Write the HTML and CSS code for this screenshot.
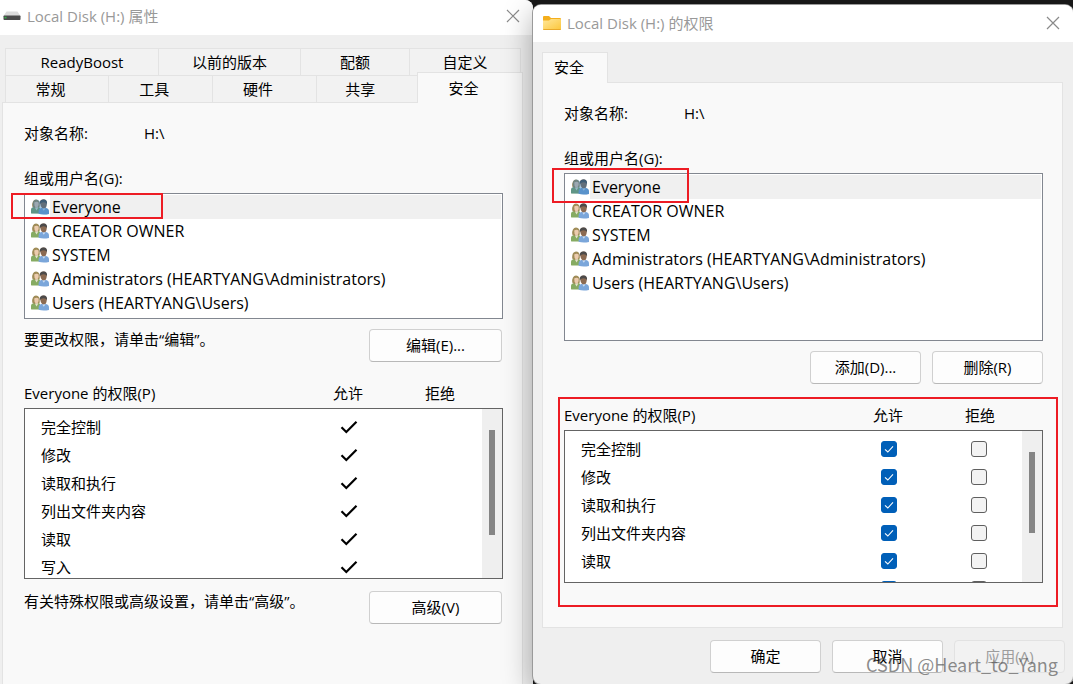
FILE: index.html
```html
<!DOCTYPE html>
<html lang="zh-CN">
    <head>
        <meta charset="utf-8">
        <title>Local Disk (H:) 属性</title>
        <link rel="stylesheet" href="styles.css">
    </head>
    <body>
        <svg class="defs" aria-hidden="true">
            <symbol id="tick" viewBox="0 0 18 14">
                <path d="M1.5 7.2 L6.3 12 L16.5 1.8" fill="none" stroke="#000" stroke-width="2.2"/>
            </symbol>
            <symbol id="cross" viewBox="0 0 14 14">
                <path d="M1 1 L13 13 M13 1 L1 13" fill="none" stroke="#8a8a8a" stroke-width="1.2"/>
            </symbol>
            <symbol id="users" viewBox="0 0 18 16">
                <path d="M0 14.2V11Q0 8.6 3 8L8 8Q9.6 9 9.6 14.4L3 14.6Q0 14.6 0 14.2Z" fill="#86ab62"/>
                <path d="M1.2 7.6Q.8 1 5 .6Q9.2.6 8.8 7.4L6.5 9L3.4 9Z" fill="#a08c58"/>
                <path d="M3.2 3.6Q5.5 2 7.6 3.4Q8.2 6.8 6.6 8.2Q4.6 9 3.6 7Z" fill="#ecccae"/>
                <path d="M3.8 8.4L5.6 11.4L7.4 8.2Z" fill="#e6e2cc"/>
                <path d="M7.6 14.8V12Q7.8 9.4 10.2 9L15 9Q18 9.6 18 12.6V15Q12 16.2 7.6 14.8Z" fill="#7ba6da"/>
                <path d="M9.2 4.6Q9 .6 12.6 .6Q16 .8 15.8 5Q15.4 9.4 12.8 9.8Q10 9.4 9.2 4.6Z" fill="#8b6a52"/>
                <path d="M8.8 5Q8 .4 12.6 .4Q16.6 .6 16 5Q15.2 3.2 12.6 3.2Q10 3.2 8.8 5Z" fill="#4c4a4a"/>
                <path d="M11.2 9.4L12.8 11.8L14.6 9.2Z" fill="#c8dcf2"/>
            </symbol>
            <symbol id="users-selected" viewBox="0 0 18 16">
                <use href="#users" width="18" height="16"/>
                <path d="M0 14.2V11Q0 8.6 2 8Q.8 1 5 .6Q8 .6 8.8 2.4Q10 .4 12.6 .4Q16.6 .6 16 5L15 9Q18 9.6 18 12.6V15Q12 16.2 7.6 14.8L3 14.6Q0 14.6 0 14.2Z" fill="#2a78b8" fill-opacity=".42"/>
            </symbol>
        </svg>
        <div class="desktop">
            <section class="window back">
                <header class="titlebar">
                    <svg class="ico" viewBox="0 0 18 18">
                        <path d="M3.5 4.5H14.5L17.5 9H.5Z" fill="#dcdcdc"/>
                        <rect x=".5" y="8.5" width="17" height="4.5" rx=".8" fill="#4a4a4a"/>
                        <rect x="1.5" y="9.8" width="2" height="1.6" fill="#35b04a"/>
                    </svg>
                    <h1>Local Disk (H:) 属性</h1>
                    <button class="close" aria-label="关闭"><svg><use href="#cross"/></svg></button>
                </header>
                <div class="content">
                    <nav class="tabs row1">
                        <button>ReadyBoost</button>
                        <button>以前的版本</button>
                        <button>配额</button>
                        <button>自定义</button>
                    </nav>
                    <nav class="tabs row2">
                        <button>常规</button>
                        <button>工具</button>
                        <button>硬件</button>
                        <button>共享</button>
                        <button class="active">安全</button>
                    </nav>
                    <div class="pane">
                        <p class="object"><span>对象名称:</span>H:\</p>
                        <p class="label" id="groups1">组或用户名(G):</p>
                        <div class="listbox">
                            <ul aria-labelledby="groups1">
                                <li class="selected"><svg><use href="#users-selected"/></svg><span>Everyone</span></li>
                                <li><svg><use href="#users"/></svg><span>CREATOR OWNER</span></li>
                                <li><svg><use href="#users"/></svg><span>SYSTEM</span></li>
                                <li><svg><use href="#users"/></svg><span>Administrators (HEARTYANG\Administrators)</span></li>
                                <li><svg><use href="#users"/></svg><span>Users (HEARTYANG\Users)</span></li>
                            </ul>
                            <div class="mark mark-row"></div>
                        </div>
                        <div class="actions">
                            <p>要更改权限，请单击“编辑”。</p>
                            <button class="btn wide">编辑(E)...</button>
                        </div>
                        <div class="perms">
                            <table>
                                <thead>
                                    <tr><th>Everyone 的权限(P)</th><th>允许</th><th>拒绝</th></tr>
                                </thead>
                                <tbody>
                                    <tr><td>完全控制</td><td><svg><use href="#tick"/></svg></td><td></td></tr>
                                    <tr><td>修改</td><td><svg><use href="#tick"/></svg></td><td></td></tr>
                                    <tr><td>读取和执行</td><td><svg><use href="#tick"/></svg></td><td></td></tr>
                                    <tr><td>列出文件夹内容</td><td><svg><use href="#tick"/></svg></td><td></td></tr>
                                    <tr><td>读取</td><td><svg><use href="#tick"/></svg></td><td></td></tr>
                                    <tr><td>写入</td><td><svg><use href="#tick"/></svg></td><td></td></tr>
                                </tbody>
                            </table>
                            <div class="scrollbar"><div class="thumb"></div></div>
                        </div>
                        <div class="actions last">
                            <p>有关特殊权限或高级设置，请单击“高级”。</p>
                            <button class="btn wide">高级(V)</button>
                        </div>
                    </div>
                </div>
            </section>

            <section class="window front">
                <header class="titlebar">
                    <svg class="ico" viewBox="0 0 18 18">
                        <defs>
                            <linearGradient id="gold" x1="0" y1="0" x2="1" y2="1">
                                <stop offset="0" stop-color="#ffe79a"/>
                                <stop offset="1" stop-color="#fcc63a"/>
                            </linearGradient>
                        </defs>
                        <path d="M0 3Q0 2 1 2H6L8 4H17Q18 4 18 5V9H0Z" fill="#f4ae1c"/>
                        <path d="M0 6.5H6L8 5H17.2Q18 5 18 6V15Q18 16 17 16H1Q0 16 0 15Z" fill="url(#gold)"/>
                        <path d="M.3 15.5H17.7" stroke="#e9a92a"/>
                    </svg>
                    <h1>Local Disk (H:) 的权限</h1>
                    <button class="close" aria-label="关闭"><svg><use href="#cross"/></svg></button>
                </header>
                <div class="content">
                    <nav class="tabs single">
                        <button class="active">安全</button>
                    </nav>
                    <div class="pane">
                        <p class="object"><span>对象名称:</span>H:\</p>
                        <p class="label" id="groups2">组或用户名(G):</p>
                        <div class="listbox tall">
                            <ul aria-labelledby="groups2">
                                <li class="selected"><svg><use href="#users-selected"/></svg><span>Everyone</span></li>
                                <li><svg><use href="#users"/></svg><span>CREATOR OWNER</span></li>
                                <li><svg><use href="#users"/></svg><span>SYSTEM</span></li>
                                <li><svg><use href="#users"/></svg><span>Administrators (HEARTYANG\Administrators)</span></li>
                                <li><svg><use href="#users"/></svg><span>Users (HEARTYANG\Users)</span></li>
                            </ul>
                            <div class="mark mark-name"></div>
                        </div>
                        <div class="actions">
                            <button class="btn">添加(D)...</button>
                            <button class="btn">删除(R)</button>
                        </div>
                        <div class="perms short">
                            <table>
                                <thead>
                                    <tr><th>Everyone 的权限(P)</th><th id="allow">允许</th><th id="deny">拒绝</th></tr>
                                </thead>
                                <tbody>
                                    <tr><td id="p1">完全控制</td><td><input type="checkbox" aria-labelledby="p1 allow" checked></td><td><input type="checkbox" aria-labelledby="p1 deny"></td></tr>
                                    <tr><td id="p2">修改</td><td><input type="checkbox" aria-labelledby="p2 allow" checked></td><td><input type="checkbox" aria-labelledby="p2 deny"></td></tr>
                                    <tr><td id="p3">读取和执行</td><td><input type="checkbox" aria-labelledby="p3 allow" checked></td><td><input type="checkbox" aria-labelledby="p3 deny"></td></tr>
                                    <tr><td id="p4">列出文件夹内容</td><td><input type="checkbox" aria-labelledby="p4 allow" checked></td><td><input type="checkbox" aria-labelledby="p4 deny"></td></tr>
                                    <tr><td id="p5">读取</td><td><input type="checkbox" aria-labelledby="p5 allow" checked></td><td><input type="checkbox" aria-labelledby="p5 deny"></td></tr>
                                    <tr><td></td><td><input type="checkbox" aria-labelledby="allow" checked></td><td><input type="checkbox" aria-labelledby="deny"></td></tr>
                                </tbody>
                            </table>
                            <div class="scrollbar"><div class="thumb"></div></div>
                            <div class="mark mark-perms"></div>
                        </div>
                    </div>
                </div>
                <footer class="footer">
                    <button class="btn">确定</button>
                    <button class="btn">取消</button>
                    <button class="btn" disabled>应用(A)</button>
                </footer>
            </section>
            <div class="watermark">CSDN @Heart_to_Yang</div>
        </div>
    </body>
</html>
```
FILE: styles.css
```css
*{
    box-sizing: border-box;
}
body{
    margin: 0;
    background: #1a1a1a;
    color: #000;
    font-family: "Open Sans", "Noto Sans CJK SC", sans-serif;
    font-size: 15px;
    line-height: 20px;
}
h1, p, ul{
    margin: 0;
    padding: 0;
}
button{
    font: inherit;
    color: inherit;
    padding: 0;
    border: none;
    background: none;
}
.defs{
    display: none;
}
.desktop{
    position: relative;
    display: grid;
    grid-template-columns: 533fr 540fr;
    height: 100vh;
    overflow: hidden;
}

/* windows */
.window{
    display: flex;
    flex-direction: column;
    background: #efefef;
}
.back{
    border-radius: 0 8px 0 0;
    overflow: hidden;
}
.front{
    position: relative;
    margin-top: 5px;
    border-radius: 8px;
    box-shadow: 0 0 0 1px #9a9a9a, 0 8px 30px rgba(0,0,0,.35);
}
.titlebar{
    display: flex;
    align-items: center;
    gap: 6px;
    height: 35px;
    padding: 0 13px 3px 3px;
    background: #fff;
    color: #999;
}
.front .titlebar{
    height: 37px;
    padding: 0 13px 1px 10px;
    border-radius: 8px 8px 0 0;
}
.titlebar h1{
    flex: 1;
    font-size: 15px;
    font-weight: normal;
}
.ico{
    width: 18px;
    height: 18px;
}
.close, .close svg{
    display: block;
    width: 14px;
    height: 14px;
}
.content{
    flex: 1;
    display: flex;
    flex-direction: column;
    padding: 13px 10px 0 2px;
}
.front .content{
    padding: 10px 10px 0 9px;
}

/* tabs */
.tabs{
    display: grid;
    height: 27px;
    margin: 0 0 0 3px;
}
.tabs button{
    border: 1px solid #e3e3e3;
    border-width: 1px 0 0 1px;
    background: #f2f2f2;
}
.row1{
    grid-template-columns: 153fr 142fr 109fr 111fr;
    margin-right: 2px;
    border-right: 1px solid #e3e3e3;
}
.row2{
    grid-template-columns: 103fr 104fr 103fr 101fr 106fr;
}
.row2 button{
    padding-right: 13px;
}
.tabs .active{
    position: relative;
    margin: -3px 0 -1px;
    padding-bottom: 1px;
    border-width: 1px 1px 0 1px;
    background: #f9f9f9;
}
.single{
    grid-template-columns: 66px;
    height: 30px;
    margin: 0;
}
.single .active{
    margin-top: 0;
    padding: 0 11px 2px;
    text-align: left;
}
.pane{
    flex: 1;
    padding: 20px 19px 0 21px;
    border: 1px solid #e3e3e3;
    background: #f9f9f9;
}
.back .pane{
    border-bottom: none;
}
.object{
    display: flex;
}
.object span{
    width: 120px;
}
.label{
    margin: 25px 0 5px;
}

/* group list */
.listbox{
    position: relative;
    height: 126px;
    padding: 1px 1px 0 6px;
    border: 1px solid #828790;
    background: #fff;
}
.tall{
    height: 168px;
}
.listbox ul{
    list-style-type: none;
    font-size: 16px;
}
.listbox li{
    display: flex;
    align-items: center;
    gap: 1px;
    height: 24px;
}
.listbox li svg{
    width: 18px;
    height: 16px;
    margin-bottom: 1px;
}
.listbox li span{
    flex: 1;
    padding: 2px;
}
.selected span{
    background: #f0f0f0;
}

/* buttons */
.actions{
    display: flex;
    justify-content: flex-end;
    gap: 11px;
    margin-top: 10px;
}
.actions p{
    flex: 1;
}
.last{
    margin-top: 12px;
}
.btn{
    width: 111px;
    height: 33px;
    padding-bottom: 2px;
    border: 1px solid #d0d0d0;
    border-bottom-color: #b8b8b8;
    border-radius: 4px;
    background: #fdfdfd;
}
.wide{
    width: 133px;
    margin-right: 1px;
}
.btn:disabled{
    color: #9d9d9d;
    border-color: #e2e2e2;
    background: #f2f2f2;
}
.footer{
    display: flex;
    justify-content: flex-end;
    gap: 11px;
    padding: 12px 8px 11px;
}

/* permissions */
.perms{
    position: relative;
    margin-top: 21px;
}
.perms table, .perms thead, .perms tbody{
    display: block;
}
.perms tr{
    display: grid;
    grid-template-columns: 1fr 90px 90px;
    align-items: center;
    padding-right: 18px;
}
.perms thead tr{
    grid-template-columns: 1fr 94px 90px;
}
.perms th, .perms td{
    padding: 0;
    font-weight: normal;
}
.perms th:first-child{
    text-align: left;
}
.perms tbody{
    height: 171px;
    margin-top: 5px;
    padding: 4px 0 0 16px;
    border: 1px solid #646464;
    background: #fff;
    overflow: hidden;
}
.short tbody{
    height: 153px;
}
.perms tbody tr{
    height: 28px;
}
.perms td + td{
    display: flex;
    justify-content: center;
}
.perms td svg{
    width: 18px;
    height: 14px;
}
.perms input{
    appearance: none;
    width: 16px;
    height: 16px;
    margin: 0;
    border: 1px solid #5f5f5f;
    border-radius: 3px;
    background: #f3f3f3;
}
.perms input:checked{
    border-color: #005fb8;
    background: #005fb8 url("data:image/svg+xml,%3Csvg xmlns='http://www.w3.org/2000/svg' viewBox='0 0 14 14'%3E%3Cpath d='M3 7.4L5.8 10L11 4.4' fill='none' stroke='white' stroke-width='1.1'/%3E%3C/svg%3E");
}
.scrollbar{
    position: absolute;
    right: 1px;
    bottom: 1px;
    width: 20px;
    height: 169px;
    padding: 21px 7px 0;
    background: #efefef;
}
.thumb{
    height: 105px;
    background: #858585;
}
.short .scrollbar{
    height: 151px;
}
.short .thumb{
    height: 81px;
}

/* red outlines over the lists */
.mark{
    position: absolute;
    border: 2px solid #ed1c24;
    pointer-events: none;
}
.mark-row{
    top: -1px;
    left: -14px;
    width: 152px;
    height: 26px;
}
.mark-name{
    top: -6px;
    left: -13px;
    width: 137px;
    height: 35px;
}
.mark-perms{
    top: -8px;
    right: -15px;
    bottom: -24px;
    left: -6px;
}
.watermark{
    position: absolute;
    right: 15px;
    bottom: 8px;
    color: rgba(90,90,90,.7);
    font-family: "Noto Sans CJK SC", sans-serif;
    font-size: 18px;
    line-height: 24px;
}
```
